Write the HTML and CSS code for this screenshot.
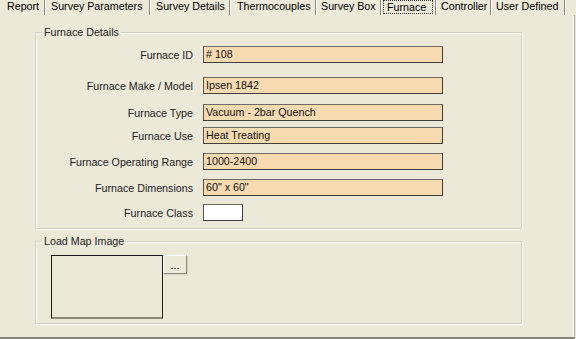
FILE: index.html
```html
<!DOCTYPE html>
<html>
<head>
<meta charset="utf-8">
<link rel="stylesheet" href="styles.css">
</head>
<body>
<div class="window">
  <div class="tabs">
    <div class="tab t-report">Report</div>
    <div class="tab t-params">Survey Parameters</div>
    <div class="tab t-details">Survey Details</div>
    <div class="tab t-thermo">Thermocouples</div>
    <div class="tab t-box">Survey Box</div>
    <div class="tab t-furnace active"><span class="focus">Furnace</span></div>
    <div class="tab t-ctrl">Controller</div>
    <div class="tab t-user">User Defined</div>
  </div>
  <div class="panel">
    <div class="group g-details">
      <span class="group-title">Furnace Details</span>
      <div class="rows">
        <div class="row r-id"><label class="lbl">Furnace ID</label><div class="field">#&nbsp;108</div></div>
        <div class="row r-make"><label class="lbl">Furnace Make / Model</label><div class="field">Ipsen 1842</div></div>
        <div class="row r-type"><label class="lbl">Furnace Type</label><div class="field">Vacuum - 2bar Quench</div></div>
        <div class="row r-use"><label class="lbl">Furnace Use</label><div class="field">Heat Treating</div></div>
        <div class="row r-range"><label class="lbl">Furnace Operating Range</label><div class="field">1000-2400</div></div>
        <div class="row r-dim"><label class="lbl">Furnace Dimensions</label><div class="field">60" x 60"</div></div>
        <div class="row r-class"><label class="lbl">Furnace Class</label><div class="field small"></div></div>
      </div>
    </div>
    <div class="group g-map">
      <span class="group-title">Load Map Image</span>
      <div class="map-row">
        <div class="map-box"></div>
        <div class="btn">...</div>
      </div>
    </div>
  </div>
</div>
</body>
</html>
```

FILE: styles.css
```css
* { box-sizing: border-box; }
html, body {
  margin: 0;
  padding: 0;
  background: #ECE9D8;
}
body {
  font-family: "Liberation Sans", Arial, sans-serif;
  font-size: 10.7px;
  color: #000;
  width: 576px;
  height: 339px;
  overflow: hidden;
}
.window {
  width: 576px;
  height: 339px;
  display: flex;
  flex-direction: column;
}
.tabs {
  display: flex;
  height: 15px;
  flex: none;
}
.tab {
  height: 15px;
  line-height: 13px;
  border-right: 1px solid #8c8a7e;
  box-shadow: 1px 0 0 #fff;
  white-space: nowrap;
  color: #000;
  overflow: hidden;
}
.t-report { width: 45px; padding-left: 7px; }
.t-params { width: 105px; padding-left: 6px; }
.t-details { width: 80px; padding-left: 6px; }
.t-thermo { width: 86px; padding-left: 7px; }
.t-box { width: 65px; padding-left: 5px; }
.t-furnace { width: 55px; padding-left: 2px; }
.t-ctrl { width: 55px; padding-left: 5px; }
.t-user { width: 74px; padding-left: 5px; }
.focus {
  display: inline-block;
  border: 1px dotted #333;
  width: 50px;
  height: 14px;
  line-height: 12px;
  padding-left: 3px;
}
.panel {
  flex: 1;
  width: 575px;
  border-right: 1px solid #a8a696;
  border-bottom: 2px solid #85837a;
  box-shadow: inset -1px 0 0 #fff;
  padding: 17px 0 0 35px;
  display: flex;
  flex-direction: column;
}
.group {
  position: relative;
  width: 487px;
  border: 1px solid #cfcdbd;
  box-shadow: inset 1px 1px 0 #fff, 1px 1px 0 #fff;
}
.group-title {
  position: absolute;
  top: -7px;
  left: 6px;
  padding: 0 2px;
  background: #ECE9D8;
  line-height: 13px;
  color: #222;
}
.g-details {
  height: 197px;
}
.rows {
  display: flex;
  flex-direction: column;
  padding-top: 13px;
}
.row {
  display: flex;
  align-items: center;
  height: 17px;
}
.r-make { margin-top: 14px; }
.r-type { margin-top: 10px; }
.r-use { margin-top: 6px; }
.r-range { margin-top: 9px; }
.r-dim { margin-top: 9px; }
.r-class { margin-top: 8px; }
.lbl {
  width: 157px;
  text-align: right;
  color: #222;
  margin-right: 10px;
}
.field {
  width: 240px;
  height: 17px;
  background: #F8DAB0;
  border: 1px solid #3f3e3a;
  border-top-color: #6e6c62;
  border-left-color: #555;
  line-height: 15px;
  padding-left: 2px;
  color: #111;
  white-space: nowrap;
}
.field.small {
  width: 40px;
  background: #fff;
}
.g-map {
  margin-top: 12px;
  height: 83px;
}
.map-row {
  display: flex;
  align-items: flex-start;
  padding: 13px 0 0 15px;
}
.map-box {
  width: 112px;
  height: 64px;
  border: 1px solid #1e1e1e;
  border-bottom: 2px solid #8b887b;
  background: #ECE9D8;
}
.btn {
  width: 24px;
  height: 19px;
  background: #ECE9D8;
  border: 1px solid;
  border-color: #fff #8f8c80 #8f8c80 #fff;
  box-shadow: 1px 1px 0 #d4d0c4;
  text-align: center;
  line-height: 19px;
  font-size: 11px;
  color: #222;
}
```
